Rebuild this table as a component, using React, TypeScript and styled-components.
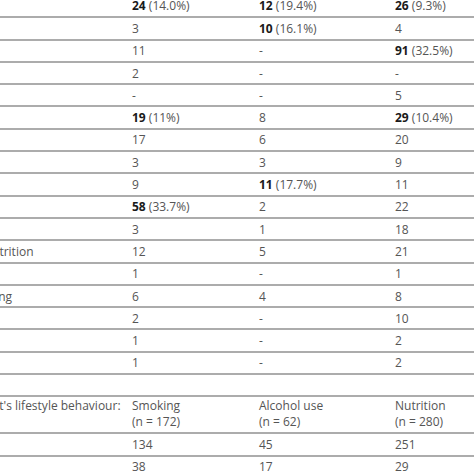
import React from 'react';
import styled, {createGlobalStyle} from "styled-components";

const GlobalStyle = createGlobalStyle`
    html, body {
        margin: 0;
        padding: 0;
        background: #ffffff;
    }
    body {
        font-family: "Open Sans", "Noto Sans", sans-serif;
    }
`

type Cell = {n: string; pct?: string; bold?: boolean};

const c = (n: string, pct?: string): Cell => ({n, pct, bold: !!pct});

const bodyRows: {label?: string; indent?: number; cells: Cell[]}[] = [
    {cells: [c('24', '14.0%'), c('12', '19.4%'), c('26', '9.3%')]},
    {cells: [c('3'), c('10', '16.1%'), c('4')]},
    {cells: [c('11'), c('-'), c('91', '32.5%')]},
    {cells: [c('2'), c('-'), c('-')]},
    {cells: [c('-'), c('-'), c('5')]},
    {cells: [c('19', '11%'), c('8'), c('29', '10.4%')]},
    {cells: [c('17'), c('6'), c('20')]},
    {cells: [c('3'), c('3'), c('9')]},
    {cells: [c('9'), c('11', '17.7%'), c('11')]},
    {cells: [c('58', '33.7%'), c('2'), c('22')]},
    {cells: [c('3'), c('1'), c('18')]},
    {label: 'Nutrition', indent: 19, cells: [c('12'), c('5'), c('21')]},
    {cells: [c('1'), c('-'), c('1')]},
    {label: 'Smoking', cells: [c('6'), c('4'), c('8')]},
    {cells: [c('2'), c('-'), c('10')]},
    {cells: [c('1'), c('-'), c('2')]},
    {cells: [c('1'), c('-'), c('2')]},
];

const lifestyleRows: Cell[][] = [
    [c('134'), c('45'), c('251')],
    [c('38'), c('17'), c('29')],
];

export default function App() {
    return (
        <>
            <GlobalStyle/>
            <Viewport>
                <Table>
                    {bodyRows.map((row, i) => (
                        <Row key={i}>
                            <Label $indent={row.indent ?? 0}>{row.label}</Label>
                            {row.cells.map((cell, j) => (
                                <Value key={j}>
                                    {cell.bold ? <Strong>{cell.n}</Strong> : cell.n}
                                    {cell.pct && <> ({cell.pct})</>}
                                </Value>
                            ))}
                        </Row>
                    ))}
                    <Row/>
                    <HeadRow>
                        <Label $indent={0}>Patient's lifestyle behaviour:</Label>
                        <Value>Smoking<br/>(n = 172)</Value>
                        <Value>Alcohol use<br/>(n = 62)</Value>
                        <Value>Nutrition<br/>(n = 280)</Value>
                    </HeadRow>
                    {lifestyleRows.map((row, i) => (
                        <Row key={i}>
                            <Label $indent={0}/>
                            {row.map((cell, j) => (
                                <Value key={j}>{cell.n}</Value>
                            ))}
                        </Row>
                    ))}
                </Table>
            </Viewport>
        </>
    );
}

const Viewport = styled.div`
    width: 474px;
    height: 474px;
    overflow: hidden;
`
const Table = styled.div`
    margin-left: -36px;
    margin-top: -6px;
    width: 560px;
    font-size: 12px;
    color: #555555;
`
const Row = styled.div`
    display: grid;
    grid-template-columns: 168px 127px 136px 1fr;
    align-items: center;
    height: 22.3px;
    box-sizing: border-box;
    border-top: 2px solid #acacac;
    &:first-child {
        border-top: none;
    }
`
const HeadRow = styled(Row)`
    height: 37px;
    align-items: start;
    padding-top: 1px;
    line-height: 16px;
`
const Label = styled.div<{ $indent: number }>`
    padding-left: ${p => p.$indent}px;
    white-space: nowrap;
`
const Value = styled.div`
    white-space: nowrap;
`
const Strong = styled.span`
    font-weight: 700;
    color: #1a1a1a;
`
